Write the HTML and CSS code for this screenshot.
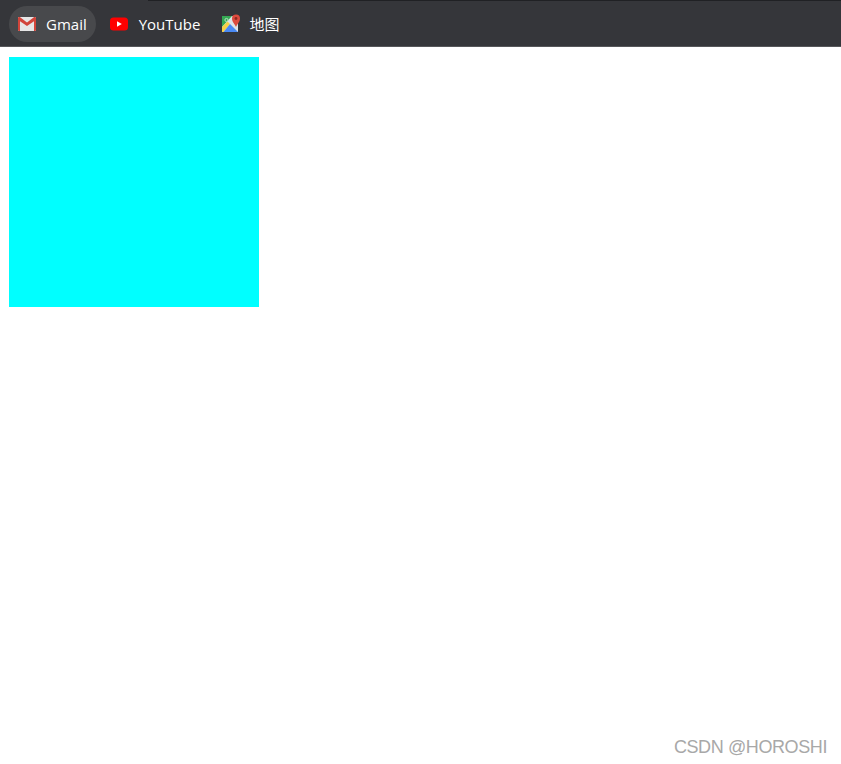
FILE: index.html
```html
<!DOCTYPE html>
<html lang="en">
<head>
<meta charset="UTF-8">
<meta name="viewport" content="width=device-width, initial-scale=1.0">
<title>Bookmarks</title>
<link rel="stylesheet" href="styles.css">
</head>
<body>

<div class="bookmarks">
    <div class="tab-edge"></div>
    <a class="bookmark active">
        <svg class="icon" viewBox="0 0 20 16">
            <rect x="1" y="1" width="18" height="14" rx="1" fill="#e6e6e6"/>
            <path d="M1 2a1 1 0 0 1 1-1h.8L10 6.500 17.200 1h.8a1 1 0 0 1 1 1v12a1 1 0 0 1-1 1h-1V5.200L10 10 3 5.200V15H2a1 1 0 0 1-1-1z" fill="#d2453b"/>
        </svg>
        <span>Gmail</span>
    </a>
    <a class="bookmark yt">
        <svg class="icon" viewBox="0 0 20 16">
            <rect x="1" y="1.500" width="18" height="13" rx="3.500" fill="#ff0000"/>
            <path d="M8 5.200v5.600L12.800 8z" fill="#ffffff"/>
        </svg>
        <span>YouTube</span>
    </a>
    <a class="bookmark maps">
        <svg class="icon" viewBox="-1 0 20 20">
            <rect x="1" y="2" width="16" height="16" fill="#dfe3e6"/>
            <path d="M1 2h10L1 13z" fill="#35a853"/>
            <path d="M1 18v-5L6.500 7.500 9 10 2.500 18z" fill="#f7d046"/>
            <path d="M2.500 18L9 10l8 8z" fill="#4a8af4"/>
            <circle cx="5.500" cy="6" r="1.600" fill="none" stroke="#b7e0c2" stroke-width="1"/>
            <path d="M15 13c-1-2.800-4-4.800-4-8.500a4 4 0 0 1 8 0c0 3.700-3 5.700-4 8.500z" fill="#dd4b3e"/>
            <circle cx="15" cy="4.500" r="1.400" fill="#8c2a22"/>
        </svg>
        <span>地图</span>
    </a>
</div>

<div class="square"></div>

<div class="watermark">CSDN @HOROSHI</div>

</body>
</html>
```

FILE: styles.css
```css
html, body {
    height: 100%;
}
body {
    margin: 0;
    background-color: #ffffff;
    overflow: hidden;
}
.bookmarks {
    position: relative;
    display: flex;
    align-items: center;
    gap: 5px;
    height: 47px;
    padding: 1px 9px 0;
    box-sizing: border-box;
    background-color: #35363a;
    border-bottom: 1px solid #56575a;
    font-family: "Open Sans", "Noto Sans CJK SC", sans-serif;
    font-size: 15px;
    color: #ffffff;
}
.tab-edge {
    position: absolute;
    top: 0;
    left: 148px;
    right: 0;
    height: 1px;
    background-color: #202124;
}
.bookmark {
    display: flex;
    align-items: center;
    gap: 10px;
    height: 36px;
    padding: 0 8px;
    border-radius: 18px;
}
.bookmark.active {
    gap: 9px;
    padding-right: 9px;
    background-color: #48494c;
}
.bookmark.yt {
    padding-right: 7px;
}
.bookmark.maps {
    gap: 9px;
}
.icon {
    width: 20px;
    height: 20px;
    flex: none;
}
.square {
    width: 250px;
    height: 250px;
    margin: 10px 0 0 9px;
    background-color: #00ffff;
}
.watermark {
    position: absolute;
    right: 14px;
    bottom: 6px;
    font-family: "Liberation Sans", Arial, sans-serif;
    font-size: 18px;
    letter-spacing: -0.4px;
    color: #a8a8a8;
}
```
